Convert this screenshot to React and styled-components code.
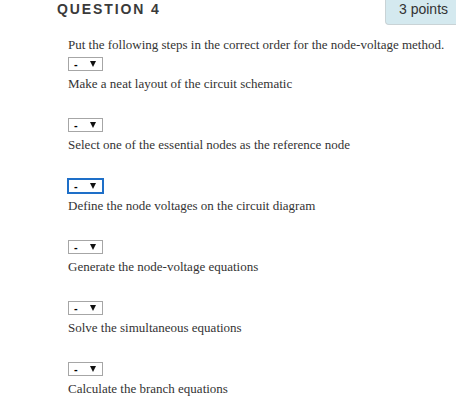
import React from 'react';
import styled, { createGlobalStyle } from 'styled-components';

const GlobalStyle = createGlobalStyle`
  body {
    margin: 0;
    background: #fff;
  }
`;

const steps = [
  'Make a neat layout of the circuit schematic',
  'Select one of the essential nodes as the reference node',
  'Define the node voltages on the circuit diagram',
  'Generate the node-voltage equations',
  'Solve the simultaneous equations',
  'Calculate the branch equations',
];

const App = () => {
  return (
    <Page>
      <GlobalStyle />
      <Header>
        <Title>QUESTION 4</Title>
        <Points>3 points</Points>
      </Header>
      <Body>
        <Prompt>Put the following steps in the correct order for the node-voltage method.</Prompt>
        {steps.map((text, i) => (
          <Step key={i}>
            <Dropdown $focused={i === 2}>
              <span>-</span>
              <Arrow />
            </Dropdown>
            <StepText $focused={i === 2}>{text}</StepText>
          </Step>
        ))}
      </Body>
    </Page>
  );
};

const Page = styled.div`
  width: 456px;
  height: 416px;
  overflow: hidden;
`;

const Header = styled.div`
  display: flex;
  justify-content: space-between;
  align-items: flex-start;
  height: 25px;
`;

const Title = styled.h2`
  margin: 0;
  padding: 1px 0 0 57px;
  font-family: 'Liberation Sans', Arial, sans-serif;
  font-size: 14px;
  font-weight: bold;
  letter-spacing: 1.9px;
  color: #3a3a3a;
  line-height: 16px;
`;

const Points = styled.div`
  box-sizing: border-box;
  width: 71px;
  height: 25px;
  background: #d4e9ef;
  border-left: 1px solid #c9d3d6;
  border-bottom: 1px solid #c9d3d6;
  border-bottom-left-radius: 4px;
  font-family: 'Liberation Sans', Arial, sans-serif;
  font-size: 14px;
  color: #333;
  padding: 1px 0 0 13px;
  line-height: 16px;
`;

const Body = styled.div`
  padding: 12px 0 0 68px;
  font-family: 'Liberation Serif', 'Times New Roman', serif;
  color: #333;
`;

const Prompt = styled.p`
  margin: 0 0 5px;
  font-size: 13px;
  line-height: 15px;
`;

const Step = styled.div`
  display: flex;
  flex-direction: column;
  align-items: flex-start;
  height: 61px;
`;

const Dropdown = styled.div`
  box-sizing: border-box;
  display: flex;
  align-items: center;
  justify-content: space-between;
  width: 35px;
  height: 14px;
  padding: 0 6px 0 5px;
  border: 1px solid #a6a6a6;
  font-family: 'Liberation Sans', Arial, sans-serif;
  font-size: 11px;
  font-weight: bold;
  color: #000;
  background: #fff;

  ${p =>
    p.$focused &&
    `
    width: 37px;
    height: 16px;
    margin: -1px 0 0 -1px;
    padding: 0 6px 0 5px;
    border: 2px solid #1e6fc8;
  `}
`;

const Arrow = styled.span`
  width: 0;
  height: 0;
  border-left: 3.5px solid transparent;
  border-right: 3.5px solid transparent;
  border-top: 6px solid #111;
`;

const StepText = styled.div`
  margin-top: ${p => (p.$focused ? '4px' : '5px')};
  font-size: 13px;
  line-height: 15px;
`;

export default App;
